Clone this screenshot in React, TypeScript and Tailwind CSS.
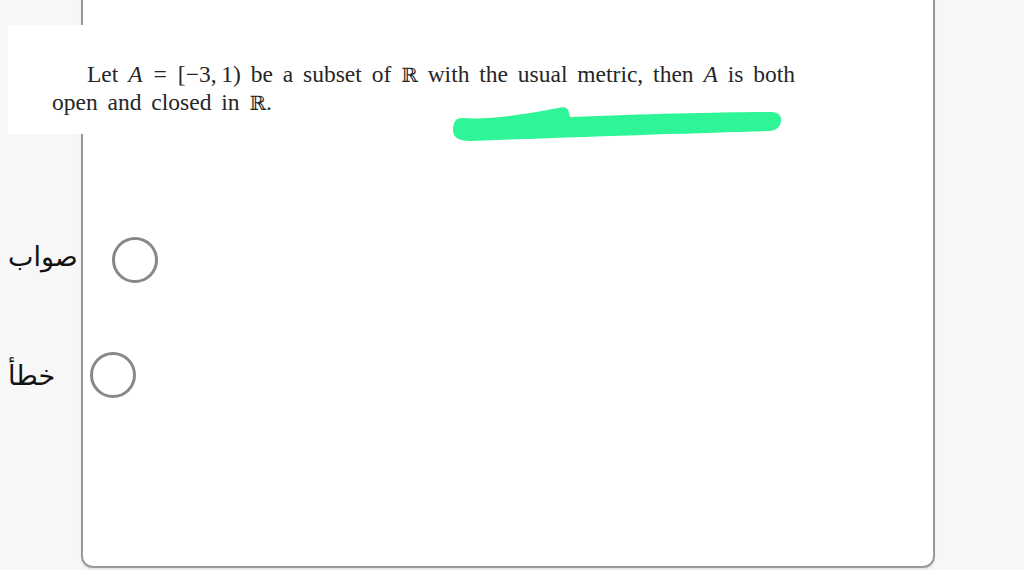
import React from "react";

export default function App() {
  return (
    <div className="relative w-[1024px] h-[570px] overflow-hidden bg-[#f7f7f7]">
      <div className="ml-[81px] mt-[-14px] w-[854px] h-[582px] border-2 border-[#9a9a9a] rounded-b-[12px] bg-white shadow-[0_2px_2px_rgba(0,0,0,0.08)]">
        <div
          className="mt-[37px] ml-[-75px] w-[800px] h-[109px] bg-white pt-[36px] pl-[44px] text-[23.5px] leading-[27px] text-[#262626] whitespace-nowrap"
          style={{ fontFamily: '"Liberation Serif", "DejaVu Serif", serif', wordSpacing: "4px" }}
        >
          <p className="indent-[35px]">
            Let <i>A</i><span className="mx-[11px]">=</span>[−3,&thinsp;1) be a subset of <span className="font-[DejaVu_Serif] text-[20px]">ℝ</span> with the usual metric, then <i>A</i> is both
            <br />
            open and closed in <span className="font-[DejaVu_Serif] text-[20px]">ℝ</span>.
          </p>
        </div>
        <div className="ml-[-75px] mt-[102px] flex items-center h-[48px]">
          <span className="w-[104px] pb-[8px] text-[27px] leading-none text-[#111]" style={{ fontFamily: '"DejaVu Sans", sans-serif' }}>صواب</span>
          <span className="w-[46px] h-[46px] rounded-full border-[3px] border-[#888]" />
        </div>
        <div className="ml-[-75px] mt-[67px] flex items-center h-[48px]">
          <span className="w-[82px] text-[27px] leading-none text-[#111]" style={{ fontFamily: '"DejaVu Sans", sans-serif' }}>خطأ</span>
          <span className="w-[46px] h-[46px] rounded-full border-[3px] border-[#888]" />
        </div>
      </div>
      <svg className="absolute left-[440px] top-[100px]" width="360" height="50" viewBox="440 100 360 50">
        <path
          d="M 462 118 C 490 120, 520 115, 558 108 Q 568 105, 569 113 L 570 117 C 650 114, 720 112, 772 112 Q 782 113, 781 121 Q 780 130, 770 131 C 700 133, 600 136, 470 141 Q 453 141, 453 130 Q 453 118, 462 118 Z"
          fill="#2ef598"
        />
      </svg>
    </div>
  );
}
